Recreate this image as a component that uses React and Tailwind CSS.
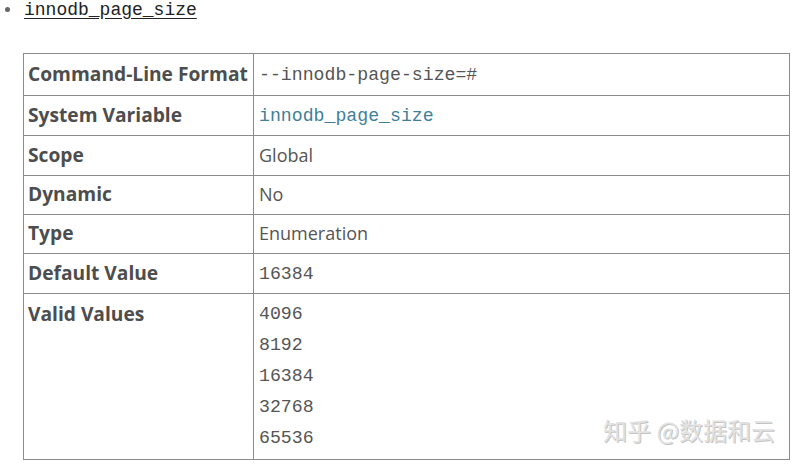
import React from "react";

const mono = { fontFamily: '"Liberation Mono", "Courier New", monospace' };

const rows = [
  { h: "Command-Line Format", v: "--innodb-page-size=#", kind: "mono", height: "h-[42px]" },
  { h: "System Variable", v: "innodb_page_size", kind: "link", height: "h-[40px]" },
  { h: "Scope", v: "Global", kind: "text", height: "h-[40px]" },
  { h: "Dynamic", v: "No", kind: "text", height: "h-[39px]" },
  { h: "Type", v: "Enumeration", kind: "text", height: "h-[39px]" },
  { h: "Default Value", v: "16384", kind: "mono", height: "h-[40px]" },
];

export default function App() {
  return (
    <div className="relative w-[795px] h-[464px] bg-white overflow-hidden font-['Open_Sans',sans-serif]">
      <div className="flex items-center h-[24px] pl-[5px]">
        <span className="w-[5px] h-[5px] rounded-full bg-[#666] mr-[14px] mt-[-6px]"></span>
        <span
          className="text-[18px] leading-[22px] text-[#222] underline underline-offset-[3px] mt-[-5px]"
          style={mono}
        >
          innodb_page_size
        </span>
      </div>
      <table className="absolute left-[23px] top-[53px] border-collapse w-[767px] text-[18px]">
        <tbody>
          {rows.map((r) => (
            <tr key={r.h} className={r.height}>
              <td className="w-[230px] border border-[#8c8c8c] px-[4px] pb-[2px] align-middle font-bold text-[#4d4d4d] text-[19.2px] leading-[26px] whitespace-nowrap">
                {r.h}
              </td>
              <td className="border border-[#8c8c8c] px-[5px] pb-[2px] align-middle leading-[26px]">
                {r.kind === "mono" && (
                  <span className="text-[#555] text-[18.2px]" style={mono}>
                    {r.v}
                  </span>
                )}
                {r.kind === "link" && (
                  <span className="text-[#3f8099] text-[18.2px]" style={mono}>
                    {r.v}
                  </span>
                )}
                {r.kind === "text" && <span className="text-[#555] text-[18px]">{r.v}</span>}
              </td>
            </tr>
          ))}
          <tr className="h-[165px]">
            <td className="w-[230px] border border-[#8c8c8c] px-[4px] pt-[4px] align-top font-bold text-[#4d4d4d] text-[19.2px] leading-[31px]">
              Valid Values
            </td>
            <td className="border border-[#8c8c8c] px-[5px] pt-[5px] pb-[5px] align-top">
              {["4096", "8192", "16384", "32768", "65536"].map((v) => (
                <div key={v} className="h-[31px] leading-[31px] text-[#555] text-[18.2px]" style={mono}>
                  {v}
                </div>
              ))}
            </td>
          </tr>
        </tbody>
      </table>
      <div
        className="absolute left-[603px] top-[414px] text-[24px] leading-[32px] text-[#e2e2e2] whitespace-nowrap"
        style={{ fontFamily: '"Noto Sans CJK SC", sans-serif', textShadow: "1px 1px 0 #c4c4c4" }}
      >
        知乎 @数据和云
      </div>
    </div>
  );
}
